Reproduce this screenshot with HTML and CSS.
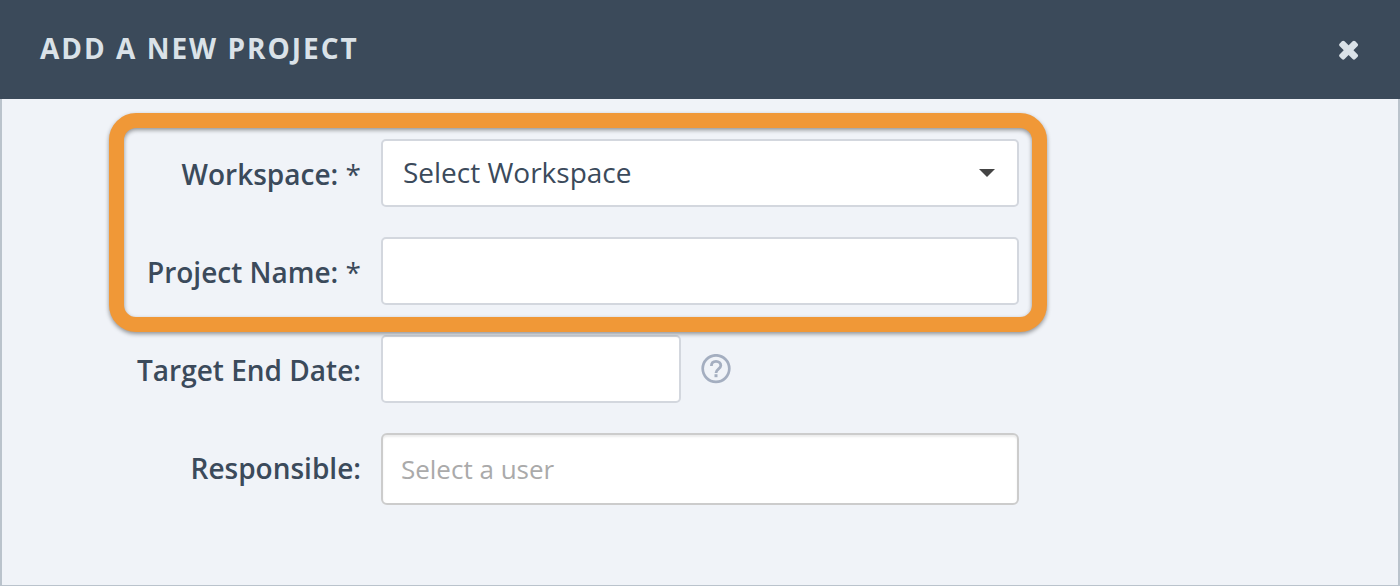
FILE: index.html
```html
<!DOCTYPE html>
<html lang="en">
<head>
<meta charset="utf-8">
<meta name="viewport" content="width=device-width, initial-scale=1">
<title>Add a New Project</title>
<link rel="stylesheet" href="styles.css">
</head>
<body>
<section class="dialog" role="dialog" aria-labelledby="dialog-title">
  <header class="dialog-header">
    <h1 class="dialog-title" id="dialog-title">ADD A NEW PROJECT</h1>
    <button class="close" type="button" aria-label="Close">
      <svg width="24" height="24" viewBox="0 0 24 24" fill="currentColor" aria-hidden="true"><g transform="translate(12.6 14.2) rotate(45)"><rect x="-11" y="-3.4" width="22" height="6.8" rx="1.9"/><rect x="-3.4" y="-11" width="6.8" height="22" rx="1.9"/></g></svg>
    </button>
  </header>
  <form class="dialog-body">
    <div class="group highlighted">
      <div class="row">
        <label class="label" for="workspace">Workspace: <span class="required">*</span></label>
        <div class="select-wrap">
          <select class="control" id="workspace" required>
            <option value="">Select Workspace</option>
          </select>
          <svg class="arrow" width="16" height="8" viewBox="0 0 16 8" aria-hidden="true"><path d="M0 0h16L8 8z" fill="currentColor"/></svg>
        </div>
      </div>
      <div class="row">
        <label class="label" for="project-name">Project Name: <span class="required">*</span></label>
        <input class="control" id="project-name" type="text" required>
      </div>
    </div>
    <div class="row">
      <label class="label" for="end-date">Target End Date:</label>
      <div class="date-field">
        <input class="control date" id="end-date" type="text">
        <button class="help" type="button" aria-label="Help">
          <svg width="30" height="30" viewBox="0 0 30 30" fill="none" stroke="currentColor" aria-hidden="true"><circle cx="15" cy="14.6" r="13.3" stroke-width="2.7"/><path d="M10.4 11.9C10.4 9.1 12.2 7.3 15 7.3S19.8 9.1 19.8 11.6C19.8 14.8 15 14.9 15 19" stroke-width="2.8"/><path d="M15 20.2v3" stroke-width="3"/></svg>
        </button>
      </div>
    </div>
    <div class="row">
      <label class="label" for="responsible">Responsible:</label>
      <input class="control user" id="responsible" type="text" placeholder="Select a user">
    </div>
  </form>
</section>
</body>
</html>
```
FILE: styles.css
```css
* {
  box-sizing: border-box;
}

body {
  margin: 0;
  font-family: "Open Sans", "Noto Sans", sans-serif;
  font-size: 28px;
  line-height: 40px;
  color: #3b4a5b;
}

.dialog {
  display: flex;
  flex-direction: column;
  min-height: 100vh;
}

.dialog-header {
  display: flex;
  align-items: center;
  justify-content: space-between;
  padding: 28px 40px 31px;
  background: #3b4a5a;
  color: #dae2e8;
}

.dialog-title {
  margin: 0;
  font-size: 28px;
  font-weight: 700;
  letter-spacing: 2px;
}

.close,
.help {
  display: flex;
  padding: 0;
  border: 0;
  background: none;
  color: inherit;
  cursor: pointer;
}

.dialog-body {
  flex: 1;
  display: flex;
  flex-direction: column;
  gap: 30px;
  padding: 40px 0;
  border: solid #bac3cc;
  border-width: 0 2px 1px;
  background: #f0f3f8;
}

.group {
  position: relative;
  display: flex;
  flex-direction: column;
  gap: 30px;
}

.highlighted::after {
  content: "";
  position: absolute;
  z-index: 1;
  top: -26px;
  right: 25.15%;
  bottom: -27px;
  left: 7.65%;
  border: 15px solid #f09837;
  border-radius: 27px;
  filter: drop-shadow(0 2px 2px rgba(0, 0, 0, 0.4));
  pointer-events: none;
}

.row {
  display: grid;
  grid-template-columns: 9fr 16fr 9fr;
  column-gap: 20px;
  align-items: start;
}

.label {
  padding-top: 15px;
  font-weight: 600;
  text-align: right;
}

.required {
  font-weight: 400;
}

.control {
  display: block;
  width: 100%;
  height: 68px;
  padding: 0 20px 2px;
  border: 2px solid #d3d7de;
  border-radius: 5px;
  background: #fff;
  color: inherit;
  font: inherit;
  appearance: none;
}

.select-wrap {
  position: relative;
}

.arrow {
  position: absolute;
  top: 30px;
  right: 24px;
  color: #444;
  pointer-events: none;
}

.date-field {
  display: flex;
  align-items: center;
  gap: 20px;
}

.date {
  width: 300px;
}

.help {
  color: #a4aec0;
}

.user {
  height: 72px;
  padding: 0 18px;
  border-color: #ccc;
  border-radius: 6px;
  box-shadow: inset 0 2px 2px rgba(0, 0, 0, 0.08);
  font-size: 26px;
}

.user::placeholder {
  color: #aaa;
  opacity: 1;
}
```
